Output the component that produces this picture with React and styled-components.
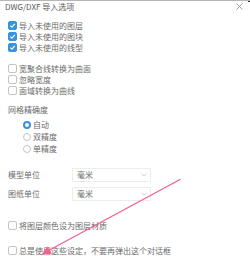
import React from "react";
import styled, { createGlobalStyle } from "styled-components";

const Global = createGlobalStyle`
  html, body { margin: 0; padding: 0; background: #fff; }
  body {
    width: 250px; height: 256px; overflow: hidden;
    font-family: "Noto Sans CJK SC", "Noto Sans", sans-serif;
  }
`;

const Dialog = styled.div`
  position: relative;
  width: 250px;
  height: 256px;
  box-sizing: border-box;
  border-top: 1px solid #b5b5b5;
  display: flex;
  flex-direction: column;
  color: #6b6b6b;
  font-size: 8px;
  line-height: 1;
  overflow: hidden;
`;

const Corner = styled.div`
  position: absolute;
  top: -1px;
  right: 0;
  width: 2px;
  height: 2px;
  background: #333;
`;

const Header = styled.div`
  height: 19px;
  display: flex;
  align-items: center;
  justify-content: space-between;
  padding: 0 7px 0 5px;
`;

const Title = styled.div`
  color: #5a5a5a;
  font-size: 8px;
`;

const Body = styled.div`
  display: flex;
  flex-direction: column;
  padding-left: 8px;
`;

const Group = styled.div`
  display: flex;
  flex-direction: column;
  margin-top: ${(p) => p.$mt || 0}px;
  padding-left: ${(p) => p.$indent || 0}px;
`;

const Row = styled.div`
  height: ${(p) => p.$h || 11}px;
  display: flex;
  align-items: center;
  gap: 2px;
  white-space: nowrap;
`;

const Box = styled.span`
  width: 9px;
  height: 9px;
  box-sizing: border-box;
  border-radius: 2px;
  flex: none;
  display: flex;
  align-items: center;
  justify-content: center;
  background: ${(p) => (p.$on ? "#3593e0" : "#fff")};
  border: 1px solid ${(p) => (p.$on ? "#3593e0" : "#c4c4c4")};
`;

const Radio = styled.span`
  width: 8px;
  height: 8px;
  box-sizing: border-box;
  border-radius: 50%;
  flex: none;
  background: #fff;
  border: ${(p) => (p.$on ? "2.2px solid #3593e0" : "1px solid #c4c4c4")};
`;

const Label = styled.div`
  height: 11px;
  display: flex;
  align-items: center;
  margin-top: ${(p) => p.$mt || 0}px;
`;

const UnitRow = styled.div`
  height: 14px;
  display: flex;
  align-items: center;
  margin-top: ${(p) => p.$mt || 0}px;
`;

const UnitLabel = styled.span`
  width: 64px;
  flex: none;
`;

const Select = styled.div`
  width: 79px;
  height: 14px;
  box-sizing: border-box;
  border: 1px solid #ededed;
  border-radius: 1px;
  display: flex;
  align-items: center;
  justify-content: space-between;
  padding: 0 3px 0 4px;
`;

const Overlay = styled.svg`
  position: absolute;
  left: 0;
  top: -1px;
  width: 250px;
  height: 256px;
  pointer-events: none;
`;

const Check = () => (
  <svg width="7" height="7" viewBox="0 0 7 7">
    <path d="M1.3 3.6 L2.9 5.1 L5.8 1.9" fill="none" stroke="#fff" strokeWidth="1.2" />
  </svg>
);

const CheckItem = ({ on, children }) => (
  <Row>
    <Box $on={on}>{on && <Check />}</Box>
    <span>{children}</span>
  </Row>
);

const RadioItem = ({ on, children }) => (
  <Row $h={12}>
    <Radio $on={on} />
    <span>{children}</span>
  </Row>
);

const Chevron = () => (
  <svg width="6" height="4" viewBox="0 0 6 4">
    <path d="M0.5 0.8 L3 3 L5.5 0.8" fill="none" stroke="#c4c4c4" strokeWidth="0.8" />
  </svg>
);

const Close = () => (
  <svg width="7" height="7" viewBox="0 0 7 7">
    <path d="M0.5 0.5 L6.5 6.5 M6.5 0.5 L0.5 6.5" stroke="#8a8a8a" strokeWidth="0.8" />
  </svg>
);

export default function App() {
  return (
    <>
      <Global />
      <Dialog>
        <Corner />
        <Header>
          <Title>DWG/DXF 导入选项</Title>
          <Close />
        </Header>
        <Body>
          <Group $mt={8}>
            <CheckItem on>导入未使用的图层</CheckItem>
            <CheckItem on>导入未使用的图块</CheckItem>
            <CheckItem on>导入未使用的线型</CheckItem>
          </Group>
          <Group $mt={10}>
            <CheckItem>宽聚合线转换为曲面</CheckItem>
            <CheckItem>忽略宽度</CheckItem>
            <CheckItem>面域转换为曲线</CheckItem>
          </Group>
          <Label $mt={8}>网格精确度</Label>
          <Group $mt={4} $indent={15}>
            <RadioItem on>自动</RadioItem>
            <RadioItem>双精度</RadioItem>
            <RadioItem>单精度</RadioItem>
          </Group>
          <UnitRow $mt={13}>
            <UnitLabel>模型单位</UnitLabel>
            <Select>
              <span>毫米</span>
              <Chevron />
            </Select>
          </UnitRow>
          <UnitRow $mt={5}>
            <UnitLabel>图纸单位</UnitLabel>
            <Select>
              <span>毫米</span>
              <Chevron />
            </Select>
          </UnitRow>
          <Group $mt={19}>
            <CheckItem>将图层颜色设为图层材质</CheckItem>
          </Group>
          <Group $mt={14}>
            <CheckItem>总是使用这些设定，不要再弹出这个对话框</CheckItem>
          </Group>
        </Body>
        <Overlay viewBox="0 0 250 256">
          <line x1="180" y1="179.5" x2="49.5" y2="250" stroke="#f0648f" strokeWidth="1.4" strokeLinecap="round" />
          <polygon points="41,255 51.9,253.8 47.6,246.4" fill="#f0648f" />
        </Overlay>
      </Dialog>
    </>
  );
}
